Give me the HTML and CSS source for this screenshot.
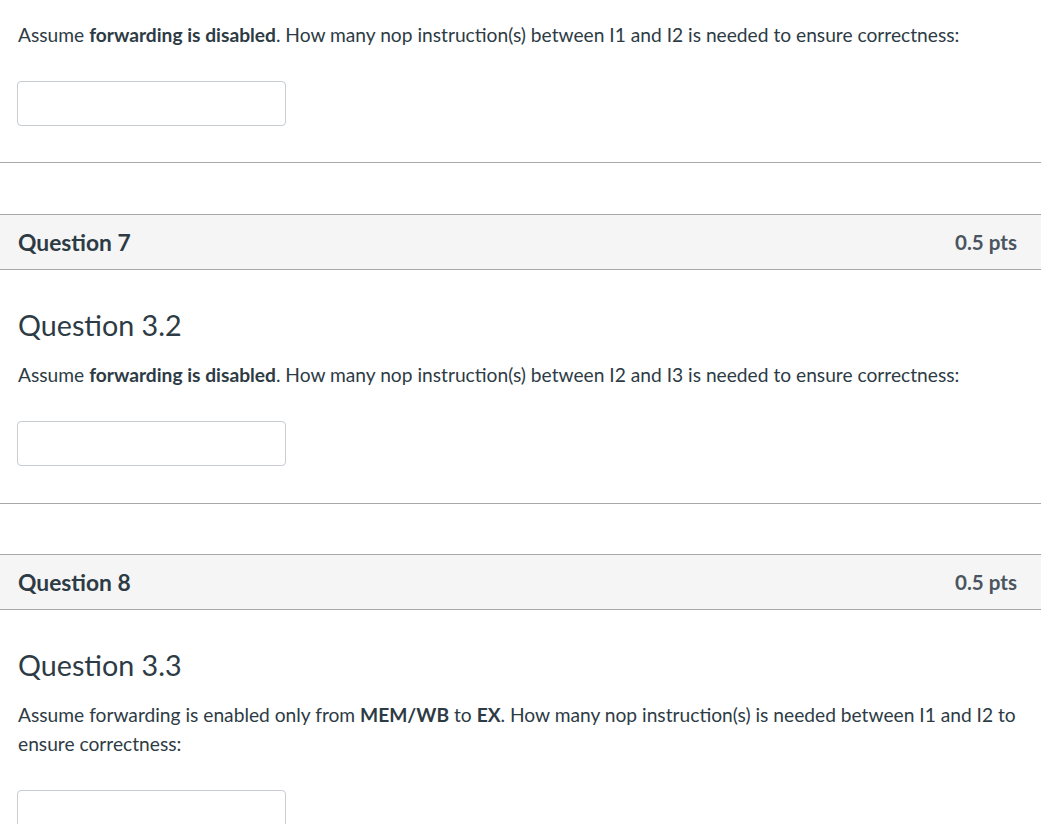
FILE: index.html
```html
<!DOCTYPE html>
<html>
<head>
<meta charset="utf-8">
<link rel="stylesheet" href="styles.css">
</head>
<body>
<div class="quiz">
  <div class="q-body first">
    <p class="q-text">Assume <strong>forwarding is disabled</strong>. How many nop instruction(s) between I1 and I2 is needed to ensure correctness:</p>
    <input class="answer" type="text">
  </div>
  <hr class="divider">

  <div class="question">
    <div class="q-header">
      <span class="q-name">Question 7</span>
      <span class="q-pts">0.5 pts</span>
    </div>
    <div class="q-body">
      <h3 class="q-title">Question 3.2</h3>
      <p class="q-text">Assume <strong>forwarding is disabled</strong>. How many nop instruction(s) between I2 and I3 is needed to ensure correctness:</p>
      <input class="answer" type="text">
    </div>
    <hr class="divider">
  </div>

  <div class="question">
    <div class="q-header">
      <span class="q-name">Question 8</span>
      <span class="q-pts">0.5 pts</span>
    </div>
    <div class="q-body">
      <h3 class="q-title">Question 3.3</h3>
      <p class="q-text">Assume forwarding is enabled only from <strong>MEM/WB</strong> to <strong>EX</strong>. How many nop instruction(s) is needed between I1 and I2 to ensure correctness:</p>
      <input class="answer" type="text">
    </div>
  </div>
</div>
</body>
</html>
```

FILE: styles.css
```css
html, body {
  margin: 0;
  padding: 0;
  background: #ffffff;
}
body {
  font-family: Lato, "Open Sans", "Liberation Sans", sans-serif;
  color: #2d3b45;
  overflow: hidden;
}
.quiz {
  display: flex;
  flex-direction: column;
  width: 1041px;
}
.q-body {
  display: flex;
  flex-direction: column;
  align-items: flex-start;
  padding: 0 20px 0 18px;
}
.q-body.first {
  padding-top: 20px;
}
.q-text {
  margin: 0;
  font-size: 19.2px;
  line-height: 29px;
}
.q-text strong {
  font-weight: 700;
}
.q-title {
  margin: 37px 0 17px;
  font-size: 28.7px;
  font-weight: 400;
  line-height: 36px;
}
.answer {
  margin: 32px 0 0 -1px;
  width: 269px;
  height: 45px;
  box-sizing: border-box;
  border: 1px solid #c7cdd1;
  border-radius: 4px;
  background: #fff;
  font: inherit;
}
.divider {
  margin: 36px 0 51px;
  border: 0;
  border-top: 1px solid #a8a8a8;
  height: 0;
}
.question .divider {
  margin: 37px 0 50px;
}
.q-header {
  display: flex;
  justify-content: space-between;
  align-items: center;
  height: 54px;
  padding: 0 24px 0 18px;
  background: #f5f5f5;
  border-top: 1px solid #a8a8a8;
  border-bottom: 1px solid #a8a8a8;
}
.q-name {
  font-size: 22.8px;
  font-weight: 700;
}
.q-pts {
  font-size: 20.6px;
  font-weight: 700;
  color: #4a5560;
}
```
